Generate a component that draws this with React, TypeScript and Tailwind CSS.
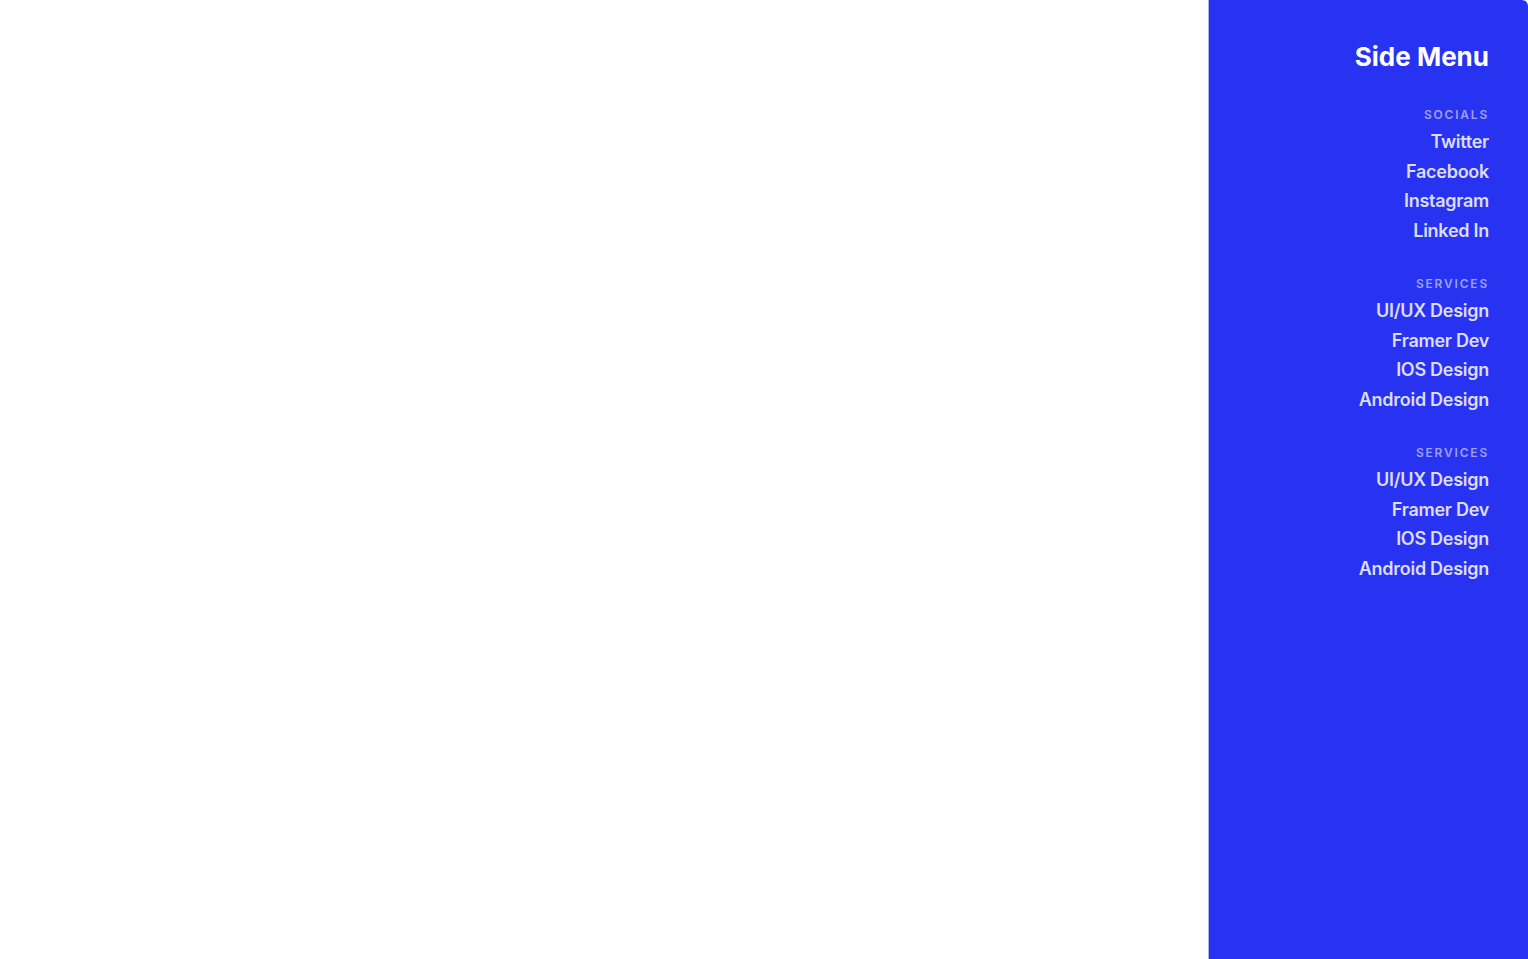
const sections = [
  { title: 'Socials', items: ['Twitter', 'Facebook', 'Instagram', 'Linked In'] },
  { title: 'Services', items: ['UI/UX Design', 'Framer Dev', 'IOS Design', 'Android Design'] },
  { title: 'Services', items: ['UI/UX Design', 'Framer Dev', 'IOS Design', 'Android Design'] }
]

const App = () => {
  return (
    <div className="flex h-[959px] w-full bg-white" style={{ fontFamily: 'Inter, "Noto Sans", sans-serif' }}>
      <div className="flex-1" />
      <aside className="flex w-[320px] flex-col items-end rounded-tr-md border-l border-[#aeb2f7] bg-[#2833f2] pr-[39px] pt-[41px]">
        <h1 className="text-[26px] font-bold leading-8 text-white">Side Menu</h1>
        <div className="mt-[34px] flex flex-col items-end gap-[30.6px]">
          {sections.map((section, i) => (
            <div key={i} className="flex flex-col items-end">
              <h3 className="text-xs font-semibold uppercase leading-4 tracking-[0.15em] text-[#9ca1f6]">{section.title}</h3>
              <ul className="mt-1 flex flex-col items-end">
                {section.items.map((item) => (
                  <li key={item}>
                    <a href="#" className="text-lg font-semibold leading-[29.6px] tracking-[-0.015em] text-[#dcdcfd] hover:text-white">
                      {item}
                    </a>
                  </li>
                ))}
              </ul>
            </div>
          ))}
        </div>
      </aside>
    </div>
  )
}

export default App
